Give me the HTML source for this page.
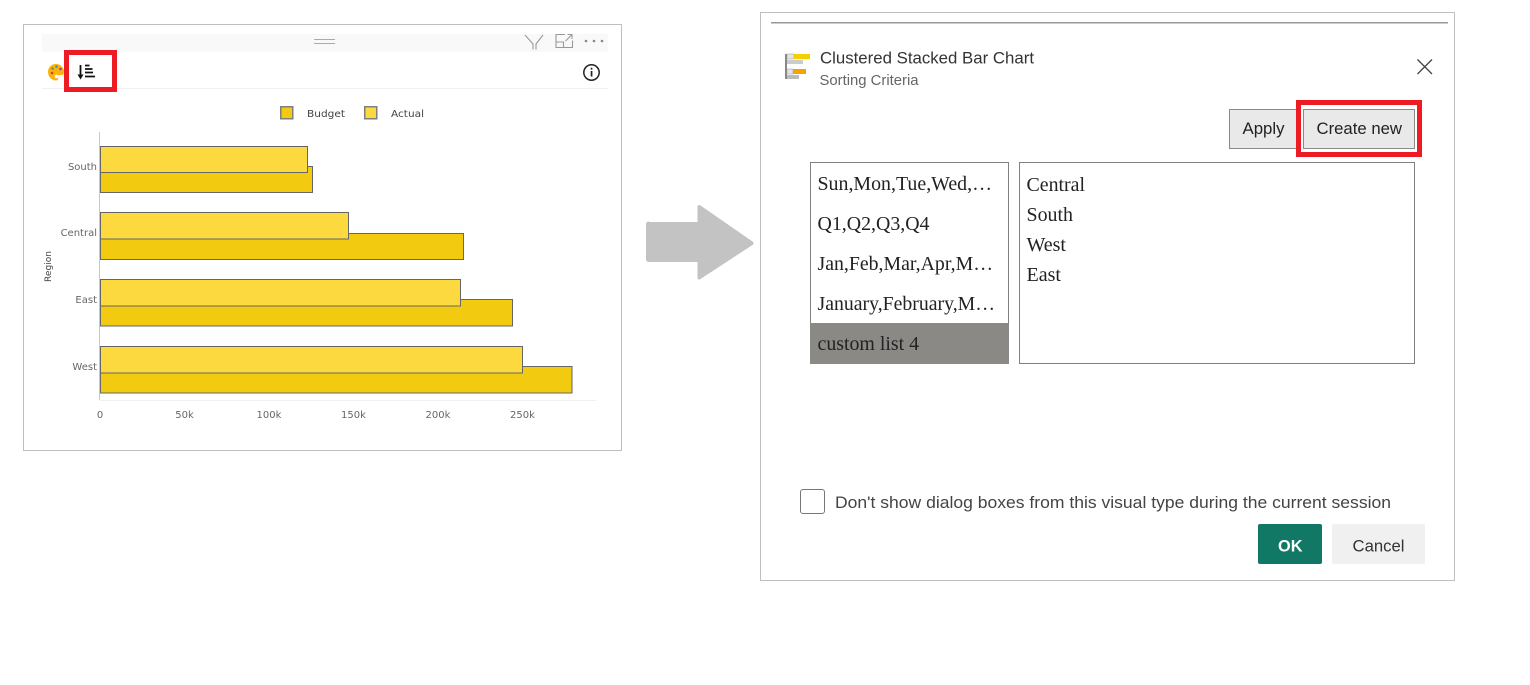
<!DOCTYPE html>
<html><head><meta charset="utf-8"><style>
html,body{margin:0;padding:0;background:#fff;width:1530px;height:685px;overflow:hidden}
svg{display:block}
.s{font-family:"Liberation Sans",sans-serif}
.t{font-family:"Liberation Serif",serif;font-size:19.5px;fill:#222}
.c{font-family:"DejaVu Sans",sans-serif;font-size:10px;fill:#666}
.b{stroke:#666;stroke-width:1}
</style></head><body>
<svg width="1530" height="685" viewBox="0 0 1530 685" xmlns="http://www.w3.org/2000/svg">
<!-- left panel -->
<rect x="23.5" y="24.5" width="598" height="426" fill="#fff" stroke="#bfbfbf"/>
<rect x="42" y="34" width="566" height="18" fill="#f9f9f9"/>
<path d="M314 39.500h21M314 43.500h21" stroke="#aaa" fill="none"/>
<path d="M525 35l8 9v5.500M543 35l-7 9v5.500" stroke="#999" stroke-width="1.100" fill="none"/>
<path d="M565 34.500h-9v13h16.500v-7M556 42h7.500v5.500M565.500 41l6-6M567.500 34.500h4.500v4.500" stroke="#999" stroke-width="1.100" fill="none"/>
<circle cx="586" cy="41" r="1.300" fill="#888"/><circle cx="594" cy="41" r="1.300" fill="#888"/><circle cx="602" cy="41" r="1.300" fill="#888"/>
<line x1="42" y1="88.500" x2="608" y2="88.500" stroke="#f0f0f0"/>
<!-- palette -->
<path d="M56 64c-5 0-8 3.500-8 8 0 4.500 3.500 8.500 8 8.500 2 0 2.500-1.500 2-3-.5-1.500.5-2.500 2-2.500h2c1.500 0 2-1.500 2-3 0-4.500-3.500-8-8-8z" fill="#fbb40f"/>
<circle cx="52.500" cy="68.500" r="1.300" fill="#4da04d"/><circle cx="56.500" cy="66.500" r="1.300" fill="#3d8fc4"/><circle cx="60.500" cy="69" r="1.300" fill="#8e44ad"/><circle cx="52" cy="73" r="1.300" fill="#e23b2e"/><circle cx="56.500" cy="76.500" r="1.700" fill="#fff"/>
<!-- sort icon -->
<rect x="66.500" y="52.500" width="48" height="37" fill="none" stroke="#ed1c24" stroke-width="5"/>
<path d="M80.500 65v12" stroke="#111" stroke-width="1.800" fill="none"/><path d="M77.500 74.500h6l-3 5z" fill="#111"/>
<path d="M85 65.500h4.500M85 69h7.500M85 72.500h8M85 76.500h10" stroke="#111" stroke-width="1.700" fill="none"/>
<circle cx="591.500" cy="72.500" r="7.700" fill="#fff" stroke="#222" stroke-width="1.500"/>
<rect x="590.700" y="71" width="1.700" height="5.500" fill="#222"/><rect x="590.700" y="67.800" width="1.700" height="1.800" fill="#222"/>
<!-- legend -->
<rect x="280.750" y="106.750" width="12" height="12" fill="#f2ca0f" stroke="#7f7f7f" stroke-width="1.500"/>
<text class="c" x="307" y="117" textLength="38" lengthAdjust="spacingAndGlyphs" style="fill:#444">Budget</text>
<rect x="364.750" y="106.750" width="12" height="12" fill="#fcd93f" stroke="#7f7f7f" stroke-width="1.500"/>
<text class="c" x="391" y="117" textLength="33" lengthAdjust="spacingAndGlyphs" style="fill:#444">Actual</text>
<!-- chart -->
<line x1="99.500" y1="132" x2="99.500" y2="400" stroke="#c8c8c8"/>
<line x1="100" y1="400.500" x2="596" y2="400.500" stroke="#f0f0f0"/>
<g fill="#f2ca0f" class="b">
<rect x="100.500" y="166.500" width="212" height="26"/>
<rect x="100.500" y="233.500" width="363" height="26"/>
<rect x="100.500" y="299.500" width="412" height="26.500"/>
<rect x="100.500" y="366.500" width="471.500" height="26.500"/>
</g>
<g fill="#fcd93f" class="b">
<rect x="100.500" y="146.500" width="207" height="26"/>
<rect x="100.500" y="212.500" width="248" height="26.500"/>
<rect x="100.500" y="279.500" width="360" height="26.500"/>
<rect x="100.500" y="346.500" width="422" height="26.500"/>
</g>
<g class="c" text-anchor="end">
<text x="97" y="170">South</text><text x="97" y="236">Central</text><text x="97" y="303">East</text><text x="97" y="370">West</text>
</g>
<text class="c" transform="translate(51,282) rotate(-90)" style="font-size:8.500px;fill:#444" textLength="31" lengthAdjust="spacingAndGlyphs">Region</text>
<g class="c" text-anchor="middle">
<text x="100" y="418">0</text><text x="184.500" y="418">50k</text><text x="269" y="418">100k</text><text x="353.500" y="418">150k</text><text x="438" y="418">200k</text><text x="522.500" y="418">250k</text>
</g>
<!-- arrow -->
<path d="M649 222h48.500v-15c0-2 1.500-2.500 3-1.500l52 36c1.500 1 1.500 2.500 0 3.500l-52 34c-1.500 1-3 .5-3-1.500v-15.500h-48.500c-2 0-3-1-3-3v-34.500c0-2 1-3 3-3z" fill="#c3c3c3"/>
<!-- dialog -->
<rect x="760.500" y="12.500" width="694" height="568" fill="#fff" stroke="#bfbfbf"/>
<rect x="771" y="22" width="677" height="1.500" fill="#999"/>
<!-- dialog icon -->
<rect x="785" y="54" width="2" height="25" fill="#888"/>
<rect x="787" y="54" width="7" height="5" fill="#e4e4e4" stroke="#999" stroke-width=".5"/><rect x="794" y="54" width="16" height="5" fill="#f5d000"/>
<rect x="787" y="60" width="16" height="4" fill="#ccc"/>
<rect x="787" y="69" width="6" height="5" fill="#e4e4e4" stroke="#999" stroke-width=".5"/><rect x="793" y="69" width="13" height="5" fill="#f0a500"/>
<rect x="787" y="75" width="12" height="4" fill="#bbb"/>
<text class="s" x="820" y="63.500" font-size="17" fill="#333" textLength="214" lengthAdjust="spacingAndGlyphs">Clustered Stacked Bar Chart</text>
<text class="s" x="819.500" y="85" font-size="14.500" fill="#666" textLength="99" lengthAdjust="spacingAndGlyphs">Sorting Criteria</text>
<path d="M1417.500 59.500l14.500 14.500M1432 59.500l-14.500 14.500" stroke="#444" stroke-width="1.300" fill="none"/>
<!-- buttons -->
<rect x="1229.500" y="109.500" width="70" height="39" fill="#e9e9e9" stroke="#8a8a8a"/>
<text class="s" x="1242.500" y="134" font-size="16.800" fill="#222" textLength="42" lengthAdjust="spacingAndGlyphs">Apply</text>
<rect x="1298.500" y="102.500" width="121" height="52" fill="#fff" stroke="#ed1c24" stroke-width="5"/>
<rect x="1303.500" y="109.500" width="111" height="39" fill="#e9e9e9" stroke="#8a8a8a"/>
<text class="s" x="1316.500" y="134" font-size="16.800" fill="#222" textLength="85.500" lengthAdjust="spacingAndGlyphs">Create new</text>
<!-- lists -->
<rect x="810.500" y="162.500" width="198" height="201" fill="#fff" stroke="#808080"/>
<rect x="810" y="323" width="199" height="41" fill="#8a8986"/>
<text class="t" x="817.500" y="190" textLength="174.500" lengthAdjust="spacingAndGlyphs">Sun,Mon,Tue,Wed,…</text>
<text class="t" x="817.500" y="230" textLength="112" lengthAdjust="spacingAndGlyphs">Q1,Q2,Q3,Q4</text>
<text class="t" x="817.500" y="270" textLength="175.500" lengthAdjust="spacingAndGlyphs">Jan,Feb,Mar,Apr,M…</text>
<text class="t" x="817.500" y="310" textLength="177.500" lengthAdjust="spacingAndGlyphs">January,February,M…</text>
<text class="t" x="817.500" y="350" textLength="101.500" lengthAdjust="spacingAndGlyphs">custom list 4</text>
<rect x="1019.500" y="162.500" width="395" height="201" fill="#fff" stroke="#808080"/>
<text class="t" x="1026.500" y="191" textLength="58.500" lengthAdjust="spacingAndGlyphs">Central</text>
<text class="t" x="1026.500" y="221" textLength="46.500" lengthAdjust="spacingAndGlyphs">South</text>
<text class="t" x="1026.500" y="251" textLength="39.500" lengthAdjust="spacingAndGlyphs">West</text>
<text class="t" x="1026.500" y="281" textLength="34.500" lengthAdjust="spacingAndGlyphs">East</text>
<!-- checkbox -->
<rect x="800.500" y="489.500" width="24" height="24" rx="2.500" fill="#fff" stroke="#777"/>
<text class="s" x="835" y="508" font-size="17" fill="#444" textLength="556" lengthAdjust="spacingAndGlyphs">Don't show dialog boxes from this visual type during the current session</text>
<rect x="1258" y="524" width="64" height="40" rx="2" fill="#117865"/>
<text class="s" x="1278" y="551.500" font-size="17" font-weight="bold" fill="#fff" textLength="24.500" lengthAdjust="spacingAndGlyphs">OK</text>
<rect x="1332" y="524" width="93" height="40" rx="2" fill="#f0f0f0"/>
<text class="s" x="1352.500" y="551.500" font-size="17" fill="#333" textLength="52" lengthAdjust="spacingAndGlyphs">Cancel</text>
</svg>
</body></html>
